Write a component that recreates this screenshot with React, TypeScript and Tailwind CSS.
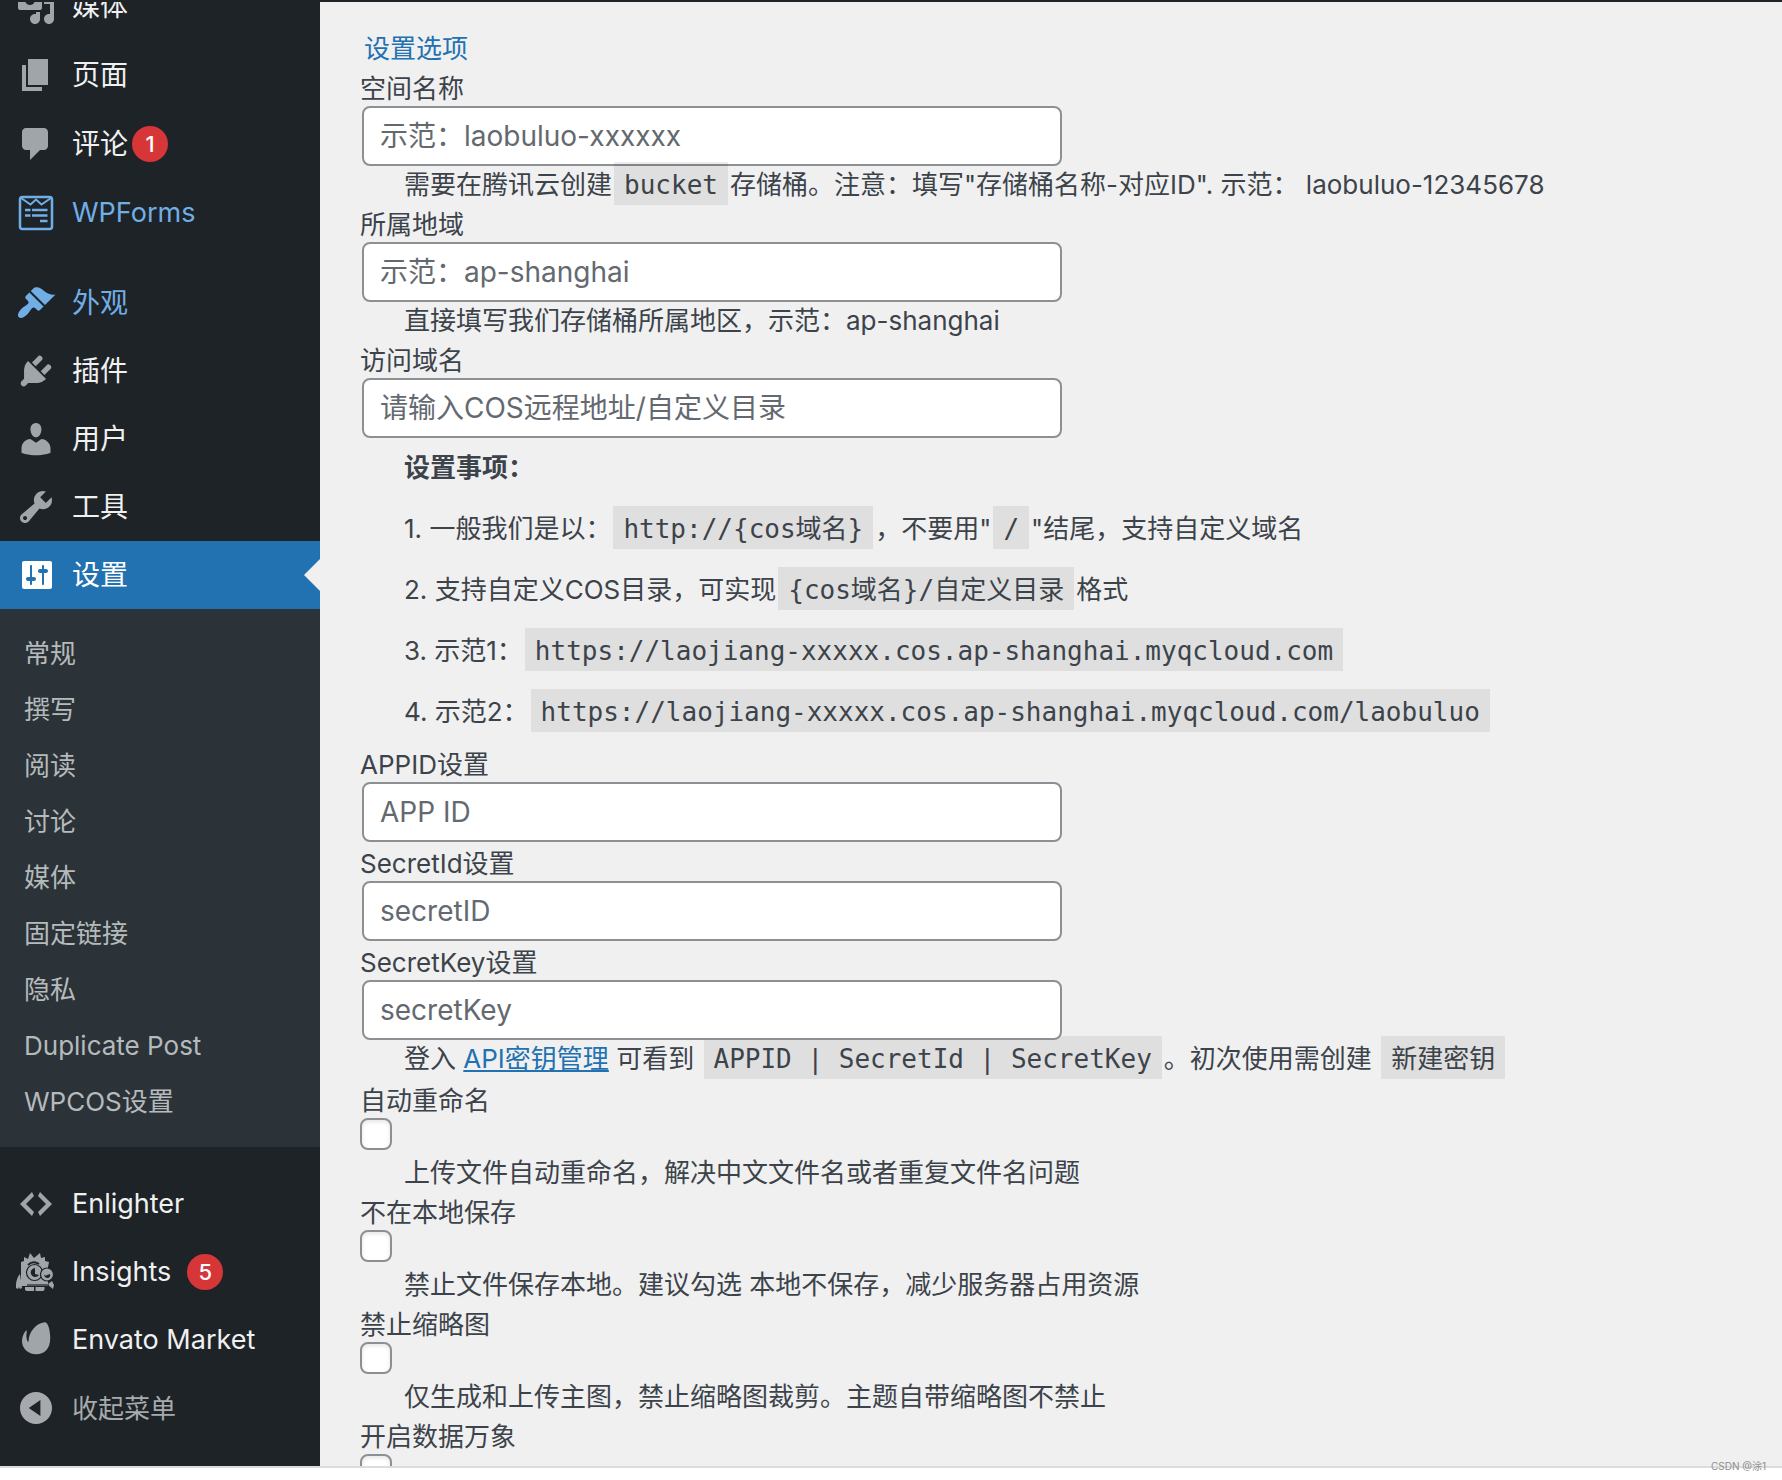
import type { ReactNode } from "react";

const ICONS = {
  media: "M13 11V4c0-.55-.45-1-1-1h-1.67L9 1H5L3.67 3H2c-.55 0-1 .45-1 1v7c0 .55.45 1 1 1h10c.55 0 1-.45 1-1zM7 4.5c1.38 0 2.5 1.12 2.5 2.5S8.38 9.5 7 9.5 4.5 8.38 4.5 7 5.62 4.5 7 4.5zM14 6h5v10.5c0 1.38-1.12 2.5-2.5 2.5S14 17.88 14 16.5s1.12-2.5 2.5-2.5c.17 0 .34.02.5.05V9h-3V6zm-4 8.05V13h2v3.5c0 1.38-1.12 2.5-2.5 2.5S7 17.88 7 16.5 8.12 14 9.5 14c.17 0 .34.02.5.05z",
  page: "M6 15V2h10v13H6zm-1 1h8v2H3V5h2v11z",
  comments: "M5 2h9c1.1 0 2 .9 2 2v7c0 1.1-.9 2-2 2h-2l-5 5v-5H5c-1.1 0-2-.9-2-2V4c0-1.1.9-2 2-2z",
  appearance: "M14.48 11.06L7.41 3.99l1.5-1.5c.5-.56 2.3-.47 3.51.32 1.21.8 1.43 1.28 2.91 2.1 1.18.64 2.45 1.26 4.45.85zm-.71.71L6.7 4.7 4.93 6.47c-.39.39-.39 1.02 0 1.41l1.06 1.06c.39.39.39 1.03 0 1.42-.6.6-1.43 1.11-2.21 1.69-.35.26-.7.53-1.01.84C1.43 14.23.4 16.08 1.4 17.07c.99 1 2.84-.03 4.18-1.36.31-.31.58-.66.85-1.02.57-.78 1.08-1.61 1.69-2.21.39-.39 1.02-.39 1.41 0l1.06 1.06c.39.39 1.02.39 1.41 0z",
  plugins: "M13.11 4.36L9.87 7.6 8 5.73l3.24-3.24c.35-.34 1.05-.2 1.56.32.52.51.66 1.21.31 1.55zm-8 1.77l.91-1.12 9.01 9.01-1.19.84c-.71.71-2.63 1.16-3.82 1.16H6.14L4.9 17.26c-.59.59-1.54.59-2.12 0-.59-.58-.59-1.53 0-2.12l1.24-1.24v-3.88c0-1.13.4-3.19 1.09-3.89zm7.26 3.97l3.24-3.24c.34-.35 1.04-.21 1.55.31.52.51.66 1.21.31 1.55l-3.24 3.25z",
  users: "M10 9.25c-2.27 0-2.73-3.44-2.73-3.44C7 4.02 7.82 2 9.97 2c2.16 0 2.98 2.02 2.71 3.81 0 0-.41 3.44-2.68 3.44zm0 2.57L12.72 10c2.39 0 4.52 2.33 4.52 4.53v2.49s-3.65 1.13-7.24 1.13c-3.65 0-7.24-1.13-7.24-1.13v-2.49c0-2.25 1.94-4.48 4.47-4.48z",
  tools: "M16.68 9.77c-1.34 1.34-3.3 1.67-4.95.99l-5.41 6.52c-.99.99-2.59.99-3.58 0s-.99-2.59 0-3.57l6.52-5.42c-.68-1.65-.35-3.61.99-4.95 1.28-1.28 3.12-1.62 4.72-1.06l-2.89 2.89 2.82 2.82 2.86-2.87c.53 1.58.18 3.39-1.08 4.65zM3.81 16.21c.4.39 1.04.39 1.43 0 .4-.4.4-1.04 0-1.43-.39-.4-1.03-.4-1.43 0-.39.39-.39 1.03 0 1.43z",
  settings: "M18 16V4c0-.55-.45-1-1-1H4c-.55 0-1 .45-1 1v12c0 .55.45 1 1 1h13c.55 0 1-.45 1-1zM8 11h1c.55 0 1 .45 1 1s-.45 1-1 1H8v1.5c0 .28-.22.5-.5.5s-.5-.22-.5-.5V13H6c-.55 0-1-.45-1-1s.45-1 1-1h1V5.5c0-.28.22-.5.5-.5s.5.22.5.5V11zm5-2h-1c-.55 0-1-.45-1-1s.45-1 1-1h1V5.5c0-.28.22-.5.5-.5s.5.22.5.5V7h1c.55 0 1 .45 1 1s-.45 1-1 1h-1v5.5c0 .28-.22.5-.5.5s-.5-.22-.5-.5V9z",
  code: "M9 6l-4 4 4 4-1 2-6-6 6-6zm2 8l4-4-4-4 1-2 6 6-6 6z",
  envato: "M14.3 1.1c1.6-.2 2.8 3.6 2.8 8 0 5.2-2.9 8-7 8-4 0-7.1-2.700-7.1-6.6 0-2 .9-4 1.9-5.1.3-.3.6-.1.5.3-.4 1.7-.2 3.8.4 5 .2.3.5.2.5-.2C6.3 6 10 1.6 14.3 1.1z",
  collapse: "M10 2a8 8 0 1 1 0 16 8 8 0 0 1 0-16zm2.2 4L6.4 10l5.8 4V6z",
};

function Glyph({ name }: { name: keyof typeof ICONS }) {
  return (
    <svg viewBox="0 0 20 20" className="size-10" fill="currentColor" fillRule="evenodd" aria-hidden="true">
      <path d={ICONS[name]} />
    </svg>
  );
}

function FormsGlyph() {
  return (
    <svg viewBox="0 0 40 40" className="size-10" fill="none" stroke="currentColor" strokeWidth="2.5" aria-hidden="true">
      <rect x="4" y="4" width="32" height="32" rx="2.5" />
      <path d="M5 5l9.500 6.500 5.500-5 5.500 5L35 5" strokeWidth="2" />
      <path d="M9 17h5.500M16 17h15.500M9 22.500h5.500M16 22.500h15.500M24 28h7.500" />
    </svg>
  );
}

function MonsterGlyph() {
  return (
    <svg viewBox="0 0 40 40" className="size-10" fill="currentColor" aria-hidden="true">
      <path d="M5 10l3-1V5l4 2 2-6 4 5 6-5 1 5 4-1v4l4 1-1 5v19H5z" />
      <path d="M4 22c-3 3-4.500 9-4 14l2 1 1-2 1 2 2-1z" />
      <path d="M9 35h9v4H11c-1.500 0-2-1-2-2zM19.500 35h9v2c0 1-.500 2-2 2h-7z" />
      <path d="M32 32l4-3 2 4-1 4-5-4z" />
      <g fill="currentColor" stroke="#1d2327" strokeWidth="1.200">
        <path d="M12 13q5-5 11-1" fill="none" strokeWidth="1.800" />
        <circle cx="18.500" cy="20.500" r="8" />
        <circle cx="31" cy="22.500" r="6.500" />
        <path d="M11 33h22" fill="none" />
      </g>
      <path d="M19 16a4.500 4.500 0 1 0 4 7l-4-1z" fill="#1d2327" />
      <path d="M28 22q1 3 3 1l3-1q1 3-2 4-4 0-4-4z" fill="#1d2327" />
    </svg>
  );
}

function Badge({ children }: { children: ReactNode }) {
  return (
    <span className="flex size-9 items-center justify-center rounded-full bg-[#d63638] text-[22px] font-medium text-white">
      {children}
    </span>
  );
}

function MenuItem({ icon, label, hover, latin, badge }: { icon: ReactNode; label: string; hover?: boolean; latin?: boolean; badge?: ReactNode }) {
  return (
    <li>
      <a href="#" className={`flex h-[68px] items-center pl-4 ${latin ? "text-[27px]" : "text-[28px]"}`}>
        <span className={hover ? "text-[#72aee6]" : "text-[#a0a5aa]"}>{icon}</span>
        <span className={hover ? "ml-4 text-[#72aee6]" : "ml-4 text-[#f0f0f1]"}>{label}</span>
        {badge}
      </a>
    </li>
  );
}

const SUBMENU = ["常规", "撰写", "阅读", "讨论", "媒体", "固定链接", "隐私", "Duplicate Post", "WPCOS设置"];

function Sidebar() {
  return (
    <nav aria-label="主菜单" className="w-80 shrink-0 bg-[#1d2327]">
      <ul className="-mt-[30px] flex flex-col gap-px">
        <MenuItem icon={<Glyph name="media" />} label="媒体" />
        <MenuItem icon={<Glyph name="page" />} label="页面" />
        <MenuItem icon={<Glyph name="comments" />} label="评论" badge={<span className="ml-1"><Badge>1</Badge></span>} />
        <MenuItem icon={<FormsGlyph />} label="WPForms" hover latin />
      </ul>
      <ul className="mt-[22px]">
        <MenuItem icon={<Glyph name="appearance" />} label="外观" hover />
        <MenuItem icon={<Glyph name="plugins" />} label="插件" />
        <MenuItem icon={<Glyph name="users" />} label="用户" />
        <MenuItem icon={<Glyph name="tools" />} label="工具" />
        <li>
          <a href="#" aria-current="page" className="relative flex h-[68px] items-center gap-4 bg-[#2271b1] pl-4 text-[28px] text-white">
            <Glyph name="settings" />
            <span>设置</span>
            <span className="absolute top-[18px] right-0 border-y-[16px] border-r-[16px] border-y-transparent border-r-[#f0f0f0]" />
          </a>
          <ul className="bg-[#2c3338] pt-4 pb-[18px] text-[26px] text-[#b5babc]">
            {SUBMENU.map((item) => (
              <li key={item}>
                <a href="#" className="flex h-14 items-center pl-6">{item}</a>
              </li>
            ))}
          </ul>
        </li>
      </ul>
      <ul className="mt-[23px]">
        <MenuItem icon={<Glyph name="code" />} label="Enlighter" latin />
        <MenuItem icon={<MonsterGlyph />} label="Insights" latin badge={<span className="ml-4"><Badge>5</Badge></span>} />
        <MenuItem icon={<Glyph name="envato" />} label="Envato Market" latin />
        <li>
          <button type="button" className="flex h-[68px] w-full items-center gap-4 pl-4 text-[26px] text-[#a7aaad]">
            <Glyph name="collapse" />
            收起菜单
          </button>
        </li>
      </ul>
    </nav>
  );
}

function Code({ children }: { children: ReactNode }) {
  return (
    <code className="mx-[2px] bg-black/[0.07] px-[10px] pt-2 pb-[5px] font-['DejaVu_Sans_Mono','Noto_Sans_CJK_SC',monospace]">
      {children}
    </code>
  );
}

function TextField({ id, label, placeholder, raised }: { id: string; label: string; placeholder: string; raised?: boolean }) {
  return (
    <div className="flex flex-col items-start">
      <label htmlFor={id} className="leading-[34px]">{label}</label>
      <input
        id={id}
        type="text"
        placeholder={placeholder}
        className={`ml-[2px] h-[60px] w-full max-w-[700px] rounded-lg border-2 border-[#8c8f94] bg-white px-4 text-[28px] placeholder:text-[#646970] ${raised ? "relative" : ""}`}
      />
    </div>
  );
}

function CheckField({ id, label, children }: { id: string; label: string; children?: ReactNode }) {
  return (
    <div className="flex flex-col items-start">
      <label htmlFor={id} className="leading-[34px]">{label}</label>
      <input
        id={id}
        type="checkbox"
        className="size-8 shrink-0 appearance-none rounded-lg border-2 border-[#8c8f94] bg-white shadow-[inset_0_2px_4px_rgba(0,0,0,0.1)]"
      />
      {children && <p className="pl-11 leading-[46px]">{children}</p>}
    </div>
  );
}

export default function App() {
  return (
    <div className="flex h-screen flex-col bg-white font-['Inter','Noto_Sans_CJK_SC',sans-serif]">
      <div className="flex min-h-0 flex-1 overflow-hidden border-t-2 border-b-2 border-t-[#1d2327] border-b-[#dcdcdc]">
        <Sidebar />
        <main className="min-w-0 flex-1 bg-[#f0f0f0] pt-7 pl-10 text-[26px] text-[#3c434a]">
          <h2 className="mb-1 pl-1 leading-[38px] text-[#2271b1]">设置选项</h2>
          <form>
            <TextField id="bucket" label="空间名称" placeholder="示范：laobuluo-xxxxxx" />
            <p className="mb-1 pl-11 leading-[38px]">
              需要在腾讯云创建<Code>bucket</Code>存储桶。注意：填写"存储桶名称-对应ID". 示范： laobuluo-12345678
            </p>
            <TextField id="region" label="所属地域" placeholder="示范：ap-shanghai" />
            <p className="mb-1 pl-11 leading-[38px]">直接填写我们存储桶所属地区，示范：ap-shanghai</p>
            <TextField id="domain" label="访问域名" placeholder="请输入COS远程地址/自定义目录" />
            <div className="mt-[10px] mb-4 flex flex-col gap-[21px] pl-11 leading-10">
              <p className="font-semibold">设置事项：</p>
              <p>1. 一般我们是以：<Code>http://{"{"}cos域名{"}"}</Code>，不要用"<Code>/</Code>"结尾，支持自定义域名</p>
              <p>2. 支持自定义COS目录，可实现<Code>{"{"}cos域名{"}"}/自定义目录</Code>格式</p>
              <p>3. 示范1：<Code>https://laojiang-xxxxx.cos.ap-shanghai.myqcloud.com</Code></p>
              <p>4. 示范2：<Code>https://laojiang-xxxxx.cos.ap-shanghai.myqcloud.com/laobuluo</Code></p>
            </div>
            <div className="flex flex-col gap-[5px]">
              <TextField id="appid" label="APPID设置" placeholder="APP ID" />
              <TextField id="secret-id" label="SecretId设置" placeholder="secretID" />
              <TextField id="secret-key" label="SecretKey设置" placeholder="secretKey" raised />
            </div>
            <p className="mb-[6px] pl-11 leading-[38px]">
              登入 <a href="#" className="text-[#2271b1] underline">API密钥管理</a> 可看到 <Code>APPID | SecretId | SecretKey</Code>。初次使用需创建 <Code>新建密钥</Code>
            </p>
            <CheckField id="rename" label="自动重命名">上传文件自动重命名，解决中文文件名或者重复文件名问题</CheckField>
            <CheckField id="no-local" label="不在本地保存">禁止文件保存本地。建议勾选 本地不保存，减少服务器占用资源</CheckField>
            <CheckField id="no-thumb" label="禁止缩略图">仅生成和上传主图，禁止缩略图裁剪。主题自带缩略图不禁止</CheckField>
            <CheckField id="imageinfo" label="开启数据万象" />
          </form>
        </main>
      </div>
      <footer className="relative h-3 shrink-0">
        <span className="absolute right-4 bottom-2 text-[10px] leading-3 text-[#8e8e8e]">CSDN @涂1</span>
      </footer>
    </div>
  );
}
